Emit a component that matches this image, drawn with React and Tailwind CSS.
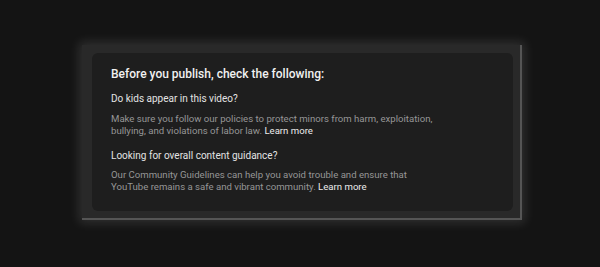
export default function App() {
  return (
    <div
      className="w-[600px] h-[267px] bg-[#141414] pt-[45px] pl-[82px]"
      style={{ fontFamily: "Roboto, 'Liberation Sans', sans-serif" }}
    >
      <div className="w-[440px] h-[175px] bg-[#292929] border-r-2 border-b-2 border-[#555555] shadow-[0_0_10px_3px_rgba(255,255,255,0.12)] pt-[8px] pl-[10px] pr-[7px] pb-[7px]">
        <div className="h-full bg-[#1e1e1e] rounded-md px-[19px] pt-[13px]">
          <h2 className="text-[12px] leading-[16px] font-medium text-[#f1f1f1]">
            Before you publish, check the following:
          </h2>
          <h3 className="mt-[10px] text-[10px] leading-[14px] text-[#e3e3e3]">
            Do kids appear in this video?
          </h3>
          <p className="mt-[7px] text-[9.6px] leading-[11.5px] text-[#969696]">
            Make sure you follow our policies to protect minors from harm, exploitation,
            <br />
            bullying, and violations of labor law.{" "}
            <span className="text-[#ececec]">Learn more</span>
          </p>
          <h3 className="mt-[13px] text-[10px] leading-[14px] text-[#e3e3e3]">
            Looking for overall content guidance?
          </h3>
          <p className="mt-[6px] text-[9.6px] leading-[11.5px] text-[#969696]">
            Our Community Guidelines can help you avoid trouble and ensure that
            <br />
            YouTube remains a safe and vibrant community.{" "}
            <span className="text-[#ececec]">Learn more</span>
          </p>
        </div>
      </div>
    </div>
  );
}
